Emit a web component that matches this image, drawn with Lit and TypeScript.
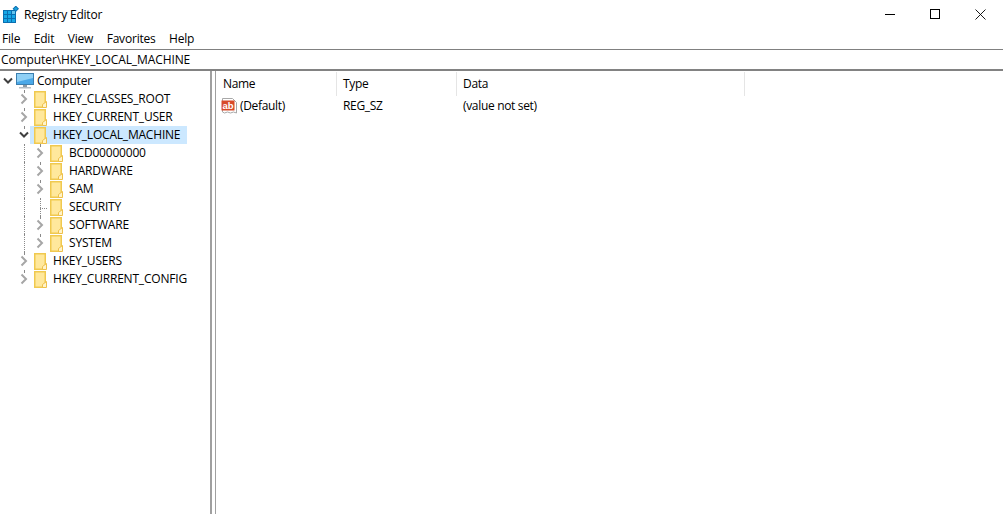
import { LitElement, html, css, svg } from "lit";
import { customElement } from "lit/decorators.js";

const chevR = html`<svg class="chev" width="10" height="12" viewBox="0 0 10 12"><path d="M2.5 1.5 L7 6 L2.5 10.5" fill="none" stroke="#a6a6a6" stroke-width="2"/></svg>`;
const chevD = html`<svg class="chev" width="12" height="10" viewBox="0 0 12 10"><path d="M2 2.5 L6 6.5 L10 2.5" fill="none" stroke="#404040" stroke-width="2"/></svg>`;
const folder = html`<svg class="folder" width="14" height="17" viewBox="0 0 14 17">
  <rect x="0.75" y="0.75" width="10.5" height="15.5" fill="#ffe89c" stroke="#f0c94f" stroke-width="1.5"/>
  <path d="M12.5 10.5 v6 h-4 v-3 z" fill="#fff3c9" stroke="#eec04a"/>
</svg>`;

type Row = { label: string; level: number; chev: "r" | "d" | "none"; selected?: boolean };
const rows: Row[] = [
  { label: "HKEY_CLASSES_ROOT", level: 1, chev: "r" },
  { label: "HKEY_CURRENT_USER", level: 1, chev: "r" },
  { label: "HKEY_LOCAL_MACHINE", level: 1, chev: "d", selected: true },
  { label: "BCD00000000", level: 2, chev: "r" },
  { label: "HARDWARE", level: 2, chev: "r" },
  { label: "SAM", level: 2, chev: "r" },
  { label: "SECURITY", level: 2, chev: "none" },
  { label: "SOFTWARE", level: 2, chev: "r" },
  { label: "SYSTEM", level: 2, chev: "r" },
  { label: "HKEY_USERS", level: 1, chev: "r" },
  { label: "HKEY_CURRENT_CONFIG", level: 1, chev: "r" },
];

@customElement("app-root")
export class AppRoot extends LitElement {
  static styles = css`
    :host {
      display: flex;
      flex-direction: column;
      height: 514px;
      width: 1003px;
      overflow: hidden;
      background: #fff;
      color: #000;
      font-family: "Open Sans", "Noto Sans", sans-serif;
      font-size: 12px;
      line-height: 18px;
      letter-spacing: -0.2px;
    }
    .title {
      height: 30px;
      display: flex;
      align-items: center;
      padding-left: 3px;
      box-sizing: border-box;
    }
    .title .name { margin-left: 5px; flex: 1; }
    .wc { display: flex; }
    .wc svg { display: block; width: 45px; height: 28px; }
    .menu {
      height: 19px;
      display: flex;
      gap: 13.5px;
      padding: 0 0 2px 2px;
      box-sizing: border-box;
      align-items: center;
    }
    .addr {
      border-top: 1px solid #808080;
      border-bottom: 2px solid #828282;
      height: 19px;
      line-height: 19px;
      padding-left: 1px;
      letter-spacing: -0.1px;
    }
    .panes { flex: 1; display: flex; min-height: 0; }
    .tree { width: 210px; padding-top: 1px; box-sizing: border-box; flex: none; }
    .split {
      width: 6px;
      flex: none;
      box-sizing: border-box;
      border-left: 2px solid #a0a0a0;
      border-right: 1px solid #a0a0a0;
    }
    .row { height: 18px; display: flex; align-items: center; position: relative; }
    .root .chev { margin-left: 2px; margin-right: 2px; }
    .root svg.mon { margin-right: 3px; }
    .cell { width: 12px; display: flex; justify-content: center; align-items: center; flex: none; height: 18px; }
    .level1 { padding-left: 18px; }
    .level2 { padding-left: 34px; }
    .row .folder { margin-left: 4px; margin-top: 1px; flex: none; }
    .label { padding: 0 3px; margin-left: 2px; white-space: nowrap; }
    .sel { position: absolute; left: 30px; top: 0; width: 157px; height: 18px; background: #cce8ff; }
    .row > *:not(.sel):not(.guide) { position: relative; }
    .guide { position: absolute; border-left: 1px dotted #8a8a8a; width: 0; }
    .guide.top { left: 24px; top: 0; height: 18px; }
    .guide.stub1 { left: 24px; top: 0; height: 2px; }
    .guide.stub2 { left: 40px; top: 0; height: 2px; }
    .guide.sec { left: 40px; top: 0; height: 18px; }
    .guide.hz { left: 40px; top: 10px; width: 7px; height: 0; border-left: 0; border-top: 1px dotted #8a8a8a; }
    .list { flex: 1; min-width: 0; padding-left: 1px; letter-spacing: -0.33px; }
    .head { display: flex; height: 24px; align-items: center; margin-top: 1px; }
    .col { height: 24px; line-height: 24px; padding-left: 6px; box-sizing: border-box; border-right: 1px solid #e5e5e5; }
    .c1 { width: 120px; }
    .c2 { width: 120px; }
    .c3 { width: 288px; }
    .vrow { display: flex; height: 18px; align-items: center; margin-top: 1px; }
    .v1 { width: 120px; display: flex; align-items: center; padding-left: 4px; box-sizing: border-box; gap: 3px; }
    .v2 { width: 120px; padding-left: 6px; box-sizing: border-box; }
    .v3 { padding-left: 6px; }
    .icon { display: block; flex: none; }
    .ab { letter-spacing: 0; }
  `;

  private renderRow(r: Row) {
    const guides = [];
    if (r.level === 2) guides.push(html`<span class="guide top"></span>`);
    if (r.level === 2 && r.chev === "r") guides.push(html`<span class="guide stub2"></span>`);
    if (r.level === 1) guides.push(html`<span class="guide stub1"></span>`);
    if (r.label === "SECURITY")
      guides.push(html`<span class="guide sec"></span><span class="guide hz"></span>`);
    return html`<div class="row level${r.level}">
      ${r.selected ? html`<span class="sel"></span>` : ""}
      ${guides}
      <span class="cell">${r.chev === "r" ? chevR : r.chev === "d" ? chevD : ""}</span>
      ${folder}
      <span class="label">${r.label}</span>
    </div>`;
  }

  render() {
    return html`
      <div class="title">
        <svg class="icon" width="16" height="18" viewBox="0 0 16 18">
          <rect x="0" y="4" width="13" height="13" fill="#0b6fb0"/>
          ${[0, 1, 2].flatMap((y) =>
            [0, 1, 2].map(
              (x) =>
                svg`<rect x="${1 + x * 4}" y="${5 + y * 4}" width="3" height="3" fill="${x === 2 && y === 0 ? "#66c5ee" : "#18a8e6"}"/>`
            )
          )}
          <rect x="11" y="1" width="3.6" height="3.6" fill="#19a3dd" stroke="#0b6fb0" transform="rotate(45 12.8 2.8)"/>
        </svg>
        <span class="name">Registry Editor</span>
        <div class="wc">
          <svg viewBox="0 0 45 28"><path d="M17 13.5 H27" stroke="#000" fill="none"/></svg>
          <svg viewBox="0 0 45 28"><rect x="17.5" y="8.5" width="9" height="9" fill="none" stroke="#000"/></svg>
          <svg viewBox="0 0 45 28"><path d="M17.5 8.5 L27.5 18.5 M27.5 8.5 L17.5 18.5" stroke="#000" fill="none" stroke-width="0.9"/></svg>
        </div>
      </div>
      <div class="menu">
        <span>File</span><span>Edit</span><span>View</span><span>Favorites</span><span>Help</span>
      </div>
      <div class="addr">Computer\\HKEY_LOCAL_MACHINE</div>
      <div class="panes">
        <div class="tree">
          <div class="row root">
            ${chevD}
            <svg class="mon" width="18" height="16" viewBox="0 0 18 16">
              <rect x="0.5" y="0.5" width="17" height="11" fill="#4aa8e8" stroke="#3b7fb0"/>
              <path d="M1 1 H17 V5 L1 9 Z" fill="#8fd0f5"/>
              <rect x="7" y="12" width="4" height="2" fill="#8c9aa4"/>
              <rect x="3" y="14" width="12" height="1.5" fill="#b4bec6"/>
            </svg>
            <span>Computer</span>
          </div>
          ${rows.map((r) => this.renderRow(r))}
        </div>
        <div class="split"></div>
        <div class="list">
          <div class="head">
            <div class="col c1">Name</div>
            <div class="col c2">Type</div>
            <div class="col c3">Data</div>
          </div>
          <div class="vrow">
            <div class="v1">
              <svg class="icon" width="16" height="16" viewBox="0 0 16 16">
                <path d="M1.5 0.5 H11.5 L15.5 4.5 V15 l-3 -1 -3 1 -3 -1 -3 1 -2 -1 Z" fill="#fff" stroke="#a8a8a8"/>
                <rect x="0.5" y="2.5" width="13" height="10" fill="#d84a2a"/>
                <text class="ab" x="1.4" y="10.5" font-size="9.5" font-weight="700" fill="#fff" font-family="Liberation Sans">ab</text>
              </svg>
              <span>(Default)</span>
            </div>
            <div class="v2">REG_SZ</div>
            <div class="v3">(value not set)</div>
          </div>
        </div>
      </div>
    `;
  }
}
